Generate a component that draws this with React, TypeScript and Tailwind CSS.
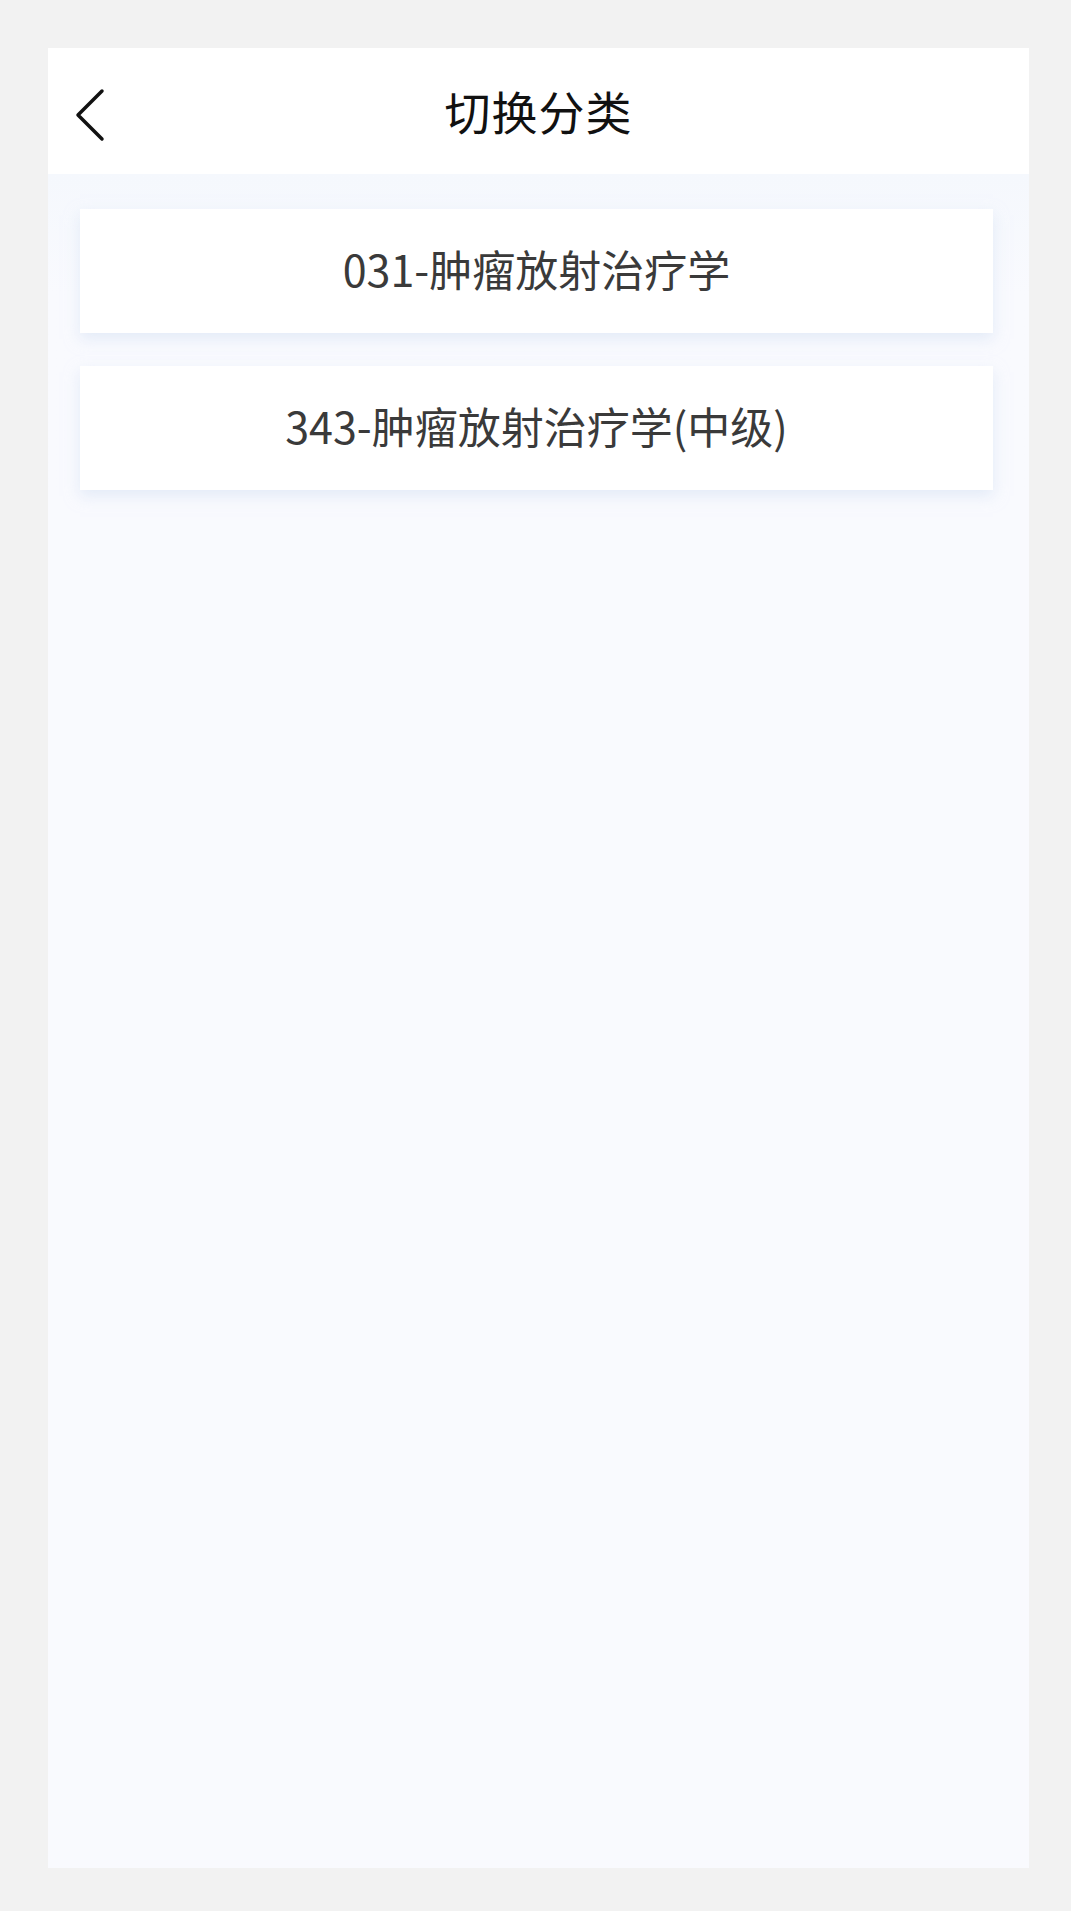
const categories = ["031-肿瘤放射治疗学", "343-肿瘤放射治疗学(中级)"];

export default function App() {
  return (
    <div
      className="min-h-[1911px] bg-[#f2f2f2] pt-[48px] pb-[43px] pl-[48px] pr-[42px]"
      style={{ fontFamily: '"Noto Sans CJK SC", "Noto Sans", sans-serif' }}
    >
      <div className="flex h-[1820px] flex-col bg-[#f9fafe]">
        <header className="relative flex h-[126px] shrink-0 items-center justify-center bg-white">
          {/* back chevron */}
          <button className="absolute left-[22px] top-[38px] flex h-[56px] w-[40px] items-center justify-center text-[#111]">
            <svg width="36" height="56" viewBox="0 0 36 56" fill="none">
              <path
                d="M30 5 L6 29 L30 53"
                stroke="currentColor"
                strokeWidth="3.5"
                strokeLinecap="round"
                strokeLinejoin="round"
              />
            </svg>
          </button>
          <h1 className="pb-[2px] text-[46px] font-normal leading-none tracking-[1px] text-[#111]">切换分类</h1>
        </header>

        <main className="flex flex-col gap-[33px] bg-gradient-to-b from-[#f5f8fd] to-[#f9fafe] to-[120px] pt-[35px] pl-[32px] pr-[36px]">
          {categories.map((name) => (
            <div
              key={name}
              className="flex h-[124px] items-center justify-center bg-white shadow-[0_6px_14px_rgba(210,222,242,0.55)]"
            >
              <span className="pb-[6px] text-[43px] leading-none text-[#3a3a3a]">{name}</span>
            </div>
          ))}
        </main>
      </div>
    </div>
  );
}
